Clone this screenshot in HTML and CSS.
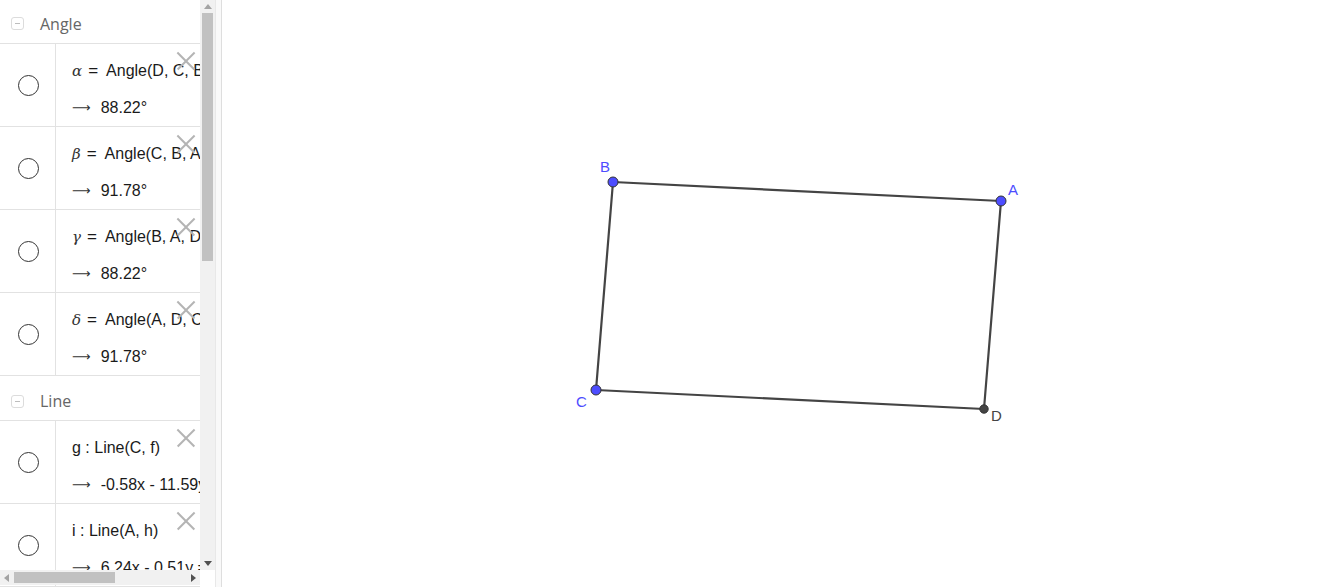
FILE: index.html
```html
<!DOCTYPE html>
<html>
<head>
<meta charset="utf-8">
<link rel="stylesheet" href="styles.css">
</head>
<body>
<div class="app">
  <div class="panel">
    <div class="list">
      <div class="group"><span class="toggle"></span><span class="gname">Angle</span></div>
      <div class="item">
        <div class="mark"><span class="radio"></span></div>
        <div class="body">
          <div class="def"><i class="gk">α</i><span class="eq">=</span>Angle(D, C, B)</div>
          <div class="val"><span class="arr">⟶</span>88.22°</div>
          <span class="del"></span>
        </div>
      </div>
      <div class="item">
        <div class="mark"><span class="radio"></span></div>
        <div class="body">
          <div class="def"><i class="gk">β</i><span class="eq">=</span>Angle(C, B, A)</div>
          <div class="val"><span class="arr">⟶</span>91.78°</div>
          <span class="del"></span>
        </div>
      </div>
      <div class="item">
        <div class="mark"><span class="radio"></span></div>
        <div class="body">
          <div class="def"><i class="gk">γ</i><span class="eq">=</span>Angle(B, A, D)</div>
          <div class="val"><span class="arr">⟶</span>88.22°</div>
          <span class="del"></span>
        </div>
      </div>
      <div class="item">
        <div class="mark"><span class="radio"></span></div>
        <div class="body">
          <div class="def"><i class="gk">δ</i><span class="eq">=</span>Angle(A, D, C)</div>
          <div class="val"><span class="arr">⟶</span>91.78°</div>
          <span class="del"></span>
        </div>
      </div>
      <div class="group g2"><span class="toggle"></span><span class="gname">Line</span></div>
      <div class="item">
        <div class="mark"><span class="radio"></span></div>
        <div class="body">
          <div class="def">g : Line(C, f)</div>
          <div class="val"><span class="arr">⟶</span>-0.58x - 11.59y = -87.1</div>
          <span class="del"></span>
        </div>
      </div>
      <div class="item">
        <div class="mark"><span class="radio"></span></div>
        <div class="body">
          <div class="def">i : Line(A, h)</div>
          <div class="val"><span class="arr">⟶</span>6.24x - 0.51y = 60.2</div>
          <span class="del"></span>
        </div>
      </div>
    </div>
    <div class="vscroll">
      <span class="tri up"></span>
      <div class="vtrack"><div class="vthumb"></div></div>
      <span class="tri down"></span>
    </div>
    <div class="hscroll">
      <span class="tri left"></span>
      <div class="htrack"><div class="hthumb"></div></div>
      <span class="tri right"></span>
    </div>
    <div class="corner"></div>
  </div>
  <div class="splitter"></div>
  <div class="canvas">
    <svg class="board" viewBox="222 0 1101 587" width="1101" height="587">
      <polygon points="613,182 1001,201 984,409 596,390" fill="none" stroke="#444" stroke-width="2.2" stroke-linejoin="round"/>
      <circle cx="613" cy="182" r="5" fill="#4d4dff" stroke="#333" stroke-width="1"/>
      <circle cx="1001" cy="201" r="5" fill="#4d4dff" stroke="#333" stroke-width="1"/>
      <circle cx="596" cy="390" r="5" fill="#4d4dff" stroke="#333" stroke-width="1"/>
      <circle cx="984" cy="409" r="4.2" fill="#444" stroke="#333" stroke-width="1"/>
      <text x="600" y="172" class="lbl">B</text>
      <text x="1008" y="195" class="lbl">A</text>
      <text x="576" y="407" class="lbl">C</text>
      <text x="991" y="421" class="lbl dk">D</text>
    </svg>
  </div>
</div>
</body>
</html>
```
FILE: styles.css
```css
html, body {
  margin: 0;
  padding: 0;
  background: #fff;
  overflow: hidden;
}
.app {
  display: flex;
  width: 1323px;
  height: 587px;
  font-family: "Liberation Sans", Arial, sans-serif;
}
.panel {
  width: 215px;
  flex: none;
  display: grid;
  grid-template-columns: 200px 15px;
  grid-template-rows: 570px 17px;
}
.list {
  overflow: hidden;
  grid-row: 1 / 3;
  grid-column: 1;
  background: #fff;
}
.group {
  height: 44px;
  display: flex;
  align-items: center;
  border-bottom: 1px solid #e2e2e2;
  box-sizing: border-box;
  padding-top: 4px;
}
.group.g2 {
  height: 45px;
  padding-top: 6px;
}
.toggle {
  width: 13px;
  height: 13px;
  margin-left: 11px;
  margin-right: 16px;
  border: 1px solid #dcdcdc;
  border-radius: 3px;
  position: relative;
  box-sizing: border-box;
  flex: none;
}
.toggle::after {
  content: "";
  position: absolute;
  left: 3px;
  right: 3px;
  top: 5px;
  height: 1px;
  background: #bdbdbd;
}
.gname {
  font-size: 16px;
  color: #666;
  font-family: "Open Sans", "Liberation Sans", sans-serif;
}
.item {
  height: 83px;
  display: flex;
  border-bottom: 1px solid #e2e2e2;
  box-sizing: border-box;
}
.mark {
  width: 56px;
  flex: none;
  border-right: 1px solid #e2e2e2;
  box-sizing: border-box;
  display: flex;
  align-items: center;
  justify-content: center;
}
.radio {
  width: 21px;
  height: 21px;
  border: 1.3px solid #333;
  border-radius: 50%;
  box-sizing: border-box;
  margin-left: 1px;
}
.body {
  position: relative;
  flex: 1;
  min-width: 0;
  padding-left: 16px;
  padding-top: 16px;
  white-space: nowrap;
  color: #1a1a1a;
  font-size: 16px;
}
.def {
  height: 22px;
  line-height: 22px;
}
.gk {
  font-family: "DejaVu Serif", "Liberation Serif", serif;
  font-style: italic;
  font-size: 15px;
  color: #333;
}
.eq {
  margin: 0 8px 0 6px;
  font-size: 17px;
}
.val {
  margin-top: 15px;
  height: 22px;
  line-height: 22px;
}
.arr {
  font-size: 13px;
  color: #333;
  margin-right: 10px;
  position: relative;
  top: -1px;
  font-family: "DejaVu Sans", sans-serif;
}
.del {
  position: absolute;
  right: 5px;
  top: 8px;
  width: 18px;
  height: 18px;
}
.del::before, .del::after {
  content: "";
  position: absolute;
  left: -3px;
  top: 8px;
  width: 24px;
  height: 1.6px;
  background: #b4b4b4;
  transform: rotate(45deg);
}
.del::after { transform: rotate(-45deg); }

.vscroll {
  grid-row: 1;
  grid-column: 2;
  background: #f1f1f1;
  display: flex;
  flex-direction: column;
  align-items: center;
}
.vtrack {
  flex: 1;
  width: 100%;
  display: flex;
  justify-content: center;
}
.vthumb {
  width: 11px;
  height: 248px;
  background: #c1c1c1;
}
.tri {
  width: 0;
  height: 0;
  flex: none;
  border-style: solid;
}
.tri.up {
  margin: 4px 0 4px;
  border-width: 0 4px 5px 4px;
  border-color: transparent transparent #a3a3a3 transparent;
}
.tri.down {
  margin: 4px 0 4px;
  border-width: 5px 4px 0 4px;
  border-color: #505050 transparent transparent transparent;
}
.hscroll {
  grid-row: 2;
  grid-column: 1;
  height: 15px;
  background: #f1f1f1;
  display: flex;
  align-items: center;
  z-index: 1;
}
.htrack {
  flex: 1;
  height: 100%;
  display: flex;
  align-items: center;
}
.hthumb {
  width: 101px;
  height: 11px;
  background: #c1c1c1;
}
.tri.left {
  margin: 0 5px 0 4px;
  border-width: 4px 5px 4px 0;
  border-color: transparent #a3a3a3 transparent transparent;
}
.tri.right {
  margin: 0 4px 0 5px;
  border-width: 4px 0 4px 5px;
  border-color: transparent transparent transparent #505050;
}
.corner {
  grid-row: 2;
  grid-column: 2;
  background: #fff;
}
.splitter {
  width: 7px;
  flex: none;
  background: #f9f9f9;
  border-left: 1px solid #e8e8e8;
  border-right: 1px solid #dedede;
  box-sizing: border-box;
}
.canvas {
  flex: 1;
  overflow: hidden;
}
.board {
  display: block;
}
.lbl {
  font-family: "Liberation Sans", Arial, sans-serif;
  font-size: 15px;
  fill: #4d4dff;
}
.lbl.dk {
  fill: #444;
}
```
